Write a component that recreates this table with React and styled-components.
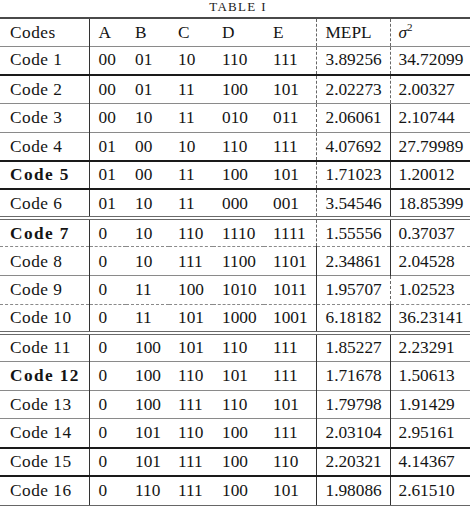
import React from 'react';
import styled, { createGlobalStyle } from 'styled-components';

const GlobalStyle = createGlobalStyle`
	html, body {
		margin: 0;
		padding: 0;
		background: #ffffff;
	}
	body {
		font-family: "Liberation Serif", "Times New Roman", serif;
		color: #141414;
	}
`;

const PageStyled = styled.div`
	width: 474px;
	height: 506px;
	overflow: hidden;
	background: #fff;
`;

const TitleStyled = styled.div`
	height: 17px;
	line-height: 14px;
	text-align: center;
	font-size: 13px;
	letter-spacing: 1.3px;
	color: #222;
	padding-left: 2px;
`;

const TableStyled = styled.table`
	width: 470px;
	border-collapse: collapse;
	table-layout: fixed;
	font-size: 17.3px;
`;

const borders = {
	thick: '2px solid #1a1a1a',
	thin: '1px solid #8a8a8a',
	dashed: '1px dashed #8a8a8a',
	double: '4px double #6a6a6a',
	top: '2px solid #4a4a4a',
	bottom: '1px solid #666',
};

const RowStyled = styled.tr`
	height: ${(p) => (p.$header ? '28px' : '28.7px')};
	td {
		border-top: ${(p) => borders[p.$top]};
		${(p) => (p.$last ? `border-bottom: ${borders.bottom};` : '')}
	}
`;

const CellStyled = styled.td`
	padding: 0 0 0 ${(p) => p.$pad || 9}px;
	white-space: nowrap;
	vertical-align: middle;
	line-height: 1;
	border-left: ${(p) =>
		p.$sep === 'solid' ? '1px solid #333' : p.$sep === 'dashed' ? '1px dashed #666' : 'none'};
`;

const LabelStyled = styled(CellStyled)`
	padding-left: 10px;
	font-weight: ${(p) => (p.$bold ? 700 : 400)};
	letter-spacing: ${(p) => (p.$bold ? '1.4px' : '0.5px')};
`;

const Sigma = styled.span`
	font-style: italic;
	sup {
		font-size: 11px;
		font-style: normal;
		vertical-align: 7px;
		line-height: 0;
	}
`;

const rows = [
	['Code 1', '00', '01', '10', '110', '111', '3.89256', '34.72099', 'thin'],
	['Code 2', '00', '01', '11', '100', '101', '2.02273', '2.00327', 'thick'],
	['Code 3', '00', '10', '11', '010', '011', '2.06061', '2.10744', 'thin'],
	['Code 4', '01', '00', '10', '110', '111', '4.07692', '27.79989', 'thin'],
	['Code 5', '01', '00', '11', '100', '101', '1.71023', '1.20012', 'thick', true],
	['Code 6', '01', '10', '11', '000', '001', '3.54546', '18.85399', 'thick'],
	['Code 7', '0', '10', '110', '1110', '1111', '1.55556', '0.37037', 'double', true],
	['Code 8', '0', '10', '111', '1100', '1101', '2.34861', '2.04528', 'dashed'],
	['Code 9', '0', '11', '100', '1010', '1011', '1.95707', '1.02523', 'thin'],
	['Code 10', '0', '11', '101', '1000', '1001', '6.18182', '36.23141', 'dashed'],
	['Code 11', '0', '100', '101', '110', '111', '1.85227', '2.23291', 'double'],
	['Code 12', '0', '100', '110', '101', '111', '1.71678', '1.50613', 'thin', true],
	['Code 13', '0', '100', '111', '110', '101', '1.79798', '1.91429', 'thin'],
	['Code 14', '0', '101', '110', '100', '111', '2.03104', '2.95161', 'thin'],
	['Code 15', '0', '101', '111', '100', '110', '2.20321', '4.14367', 'thick'],
	['Code 16', '0', '110', '111', '100', '101', '1.98086', '2.61510', 'thick'],
];

// which rows have dashed rules in the two right-hand separators
const mepDashed = (i) => i <= 6;
const sigDashed = (i) => i <= 1 || i === 8;

const App = () => {
	return (
		<PageStyled>
			<GlobalStyle />
			<TitleStyled>TABLE I</TitleStyled>
			<TableStyled>
				<colgroup>
					<col style={{ width: 89 }} />
					<col style={{ width: 37 }} />
					<col style={{ width: 43 }} />
					<col style={{ width: 44 }} />
					<col style={{ width: 51 }} />
					<col style={{ width: 52 }} />
					<col style={{ width: 74 }} />
					<col style={{ width: 80 }} />
				</colgroup>
				<tbody>
					<RowStyled $header $top="top">
						<LabelStyled>Codes</LabelStyled>
						<CellStyled $sep="solid">A</CellStyled>
						<CellStyled>B</CellStyled>
						<CellStyled>C</CellStyled>
						<CellStyled>D</CellStyled>
						<CellStyled>E</CellStyled>
						<CellStyled $sep="dashed">MEPL</CellStyled>
						<CellStyled $sep="dashed" $pad={8}>
							<Sigma>σ<sup>2</sup></Sigma>
						</CellStyled>
					</RowStyled>
					{rows.map((r, i) => (
						<RowStyled key={r[0]} $top={r[8]} $last={i === rows.length - 1}>
							<LabelStyled $bold={r[9]}>{r[0]}</LabelStyled>
							<CellStyled $sep="solid">{r[1]}</CellStyled>
							<CellStyled>{r[2]}</CellStyled>
							<CellStyled>{r[3]}</CellStyled>
							<CellStyled>{r[4]}</CellStyled>
							<CellStyled>{r[5]}</CellStyled>
							<CellStyled $sep={mepDashed(i) ? 'dashed' : 'solid'}>{r[6]}</CellStyled>
							<CellStyled $sep={sigDashed(i) ? 'dashed' : 'solid'} $pad={8}>
								{r[7]}
							</CellStyled>
						</RowStyled>
					))}
				</tbody>
			</TableStyled>
		</PageStyled>
	);
};

export default App;
